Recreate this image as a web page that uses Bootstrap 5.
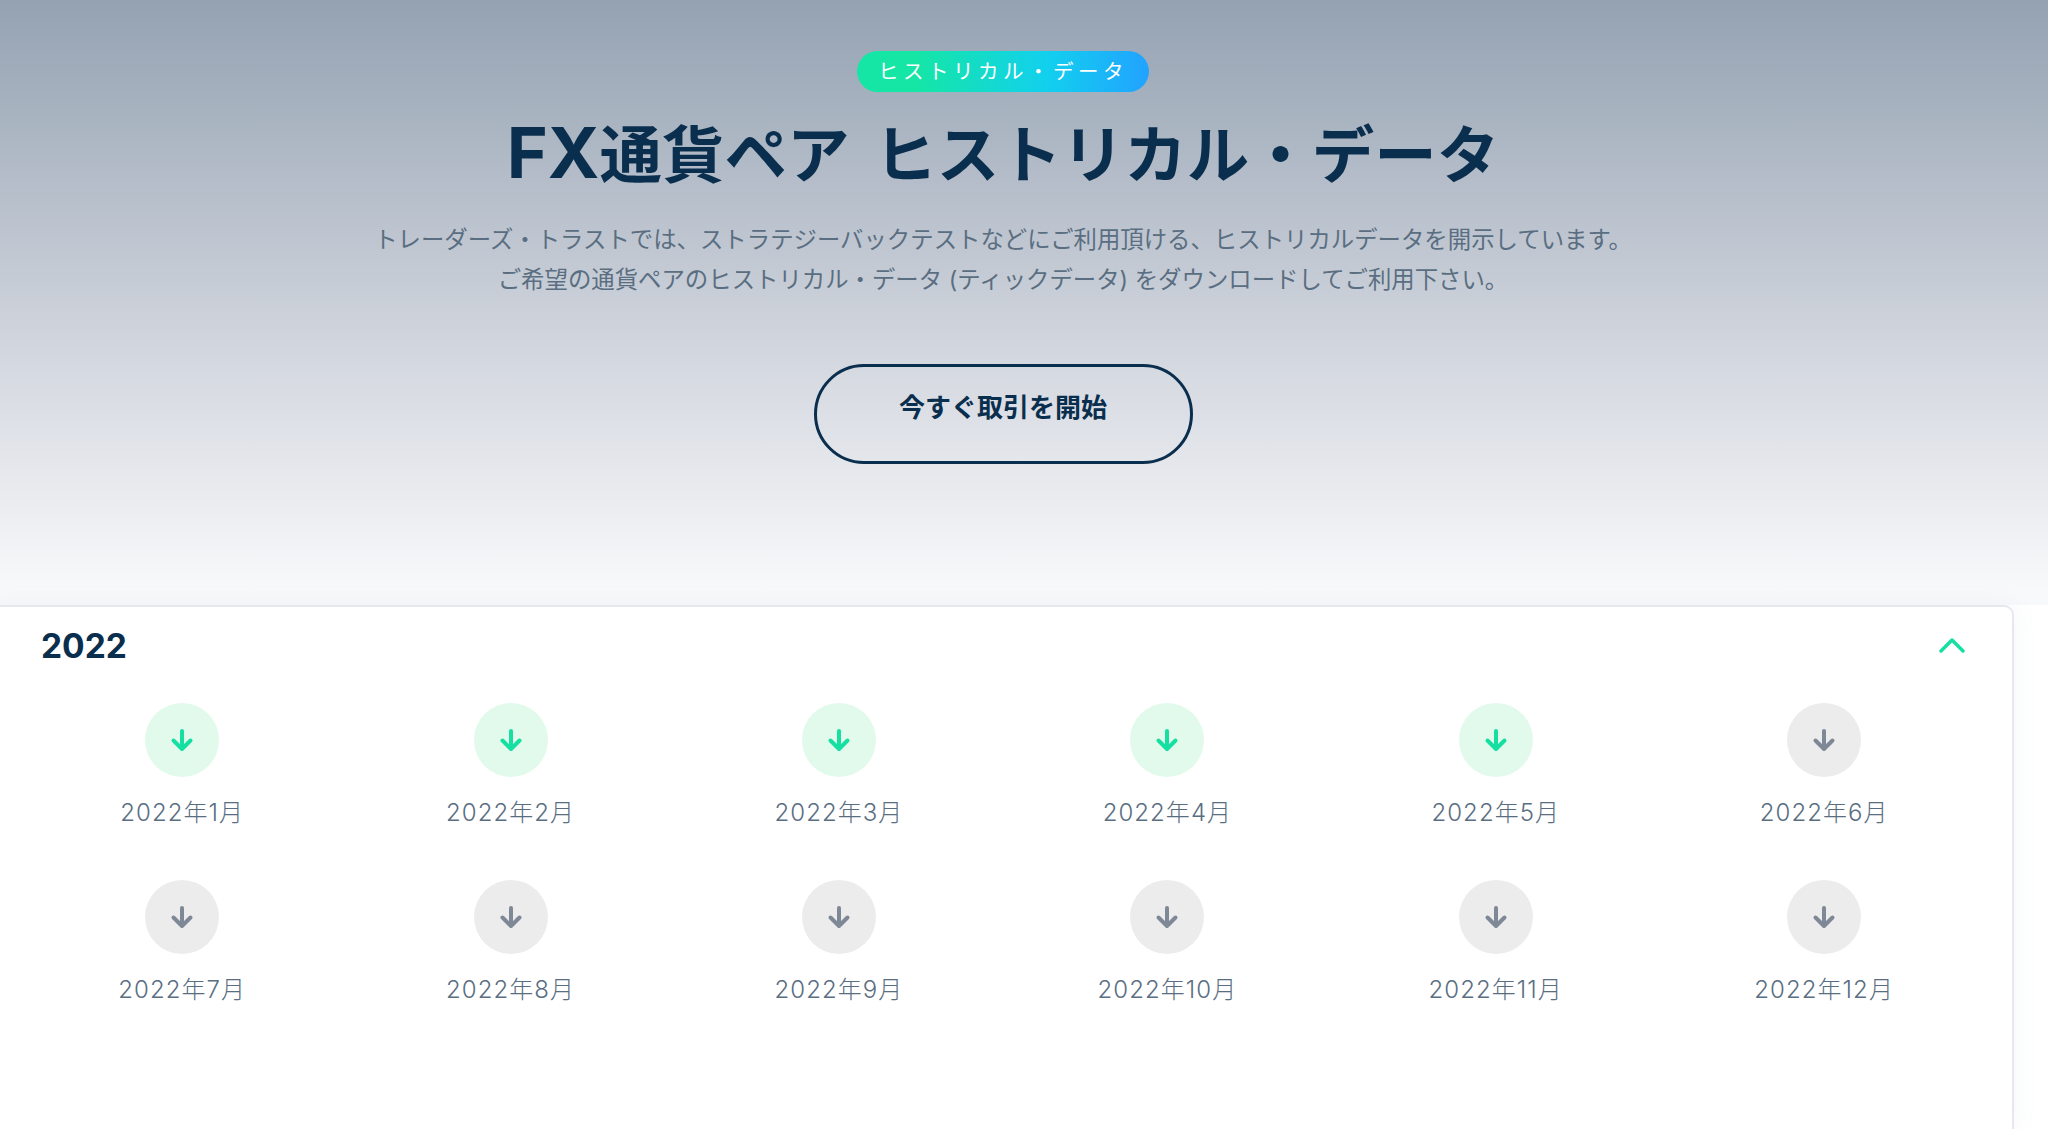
<!DOCTYPE html>
<html lang="ja">
<head>
  <meta charset="UTF-8">
  <meta name="viewport" content="width=device-width, initial-scale=1.0">
  <title>FX通貨ペア ヒストリカル・データ</title>
  <link href="https://cdn.jsdelivr.net/npm/bootstrap@5.3.0/dist/css/bootstrap.min.css" rel="stylesheet">
  <style>
    body {
      font-family: "Inter", "Noto Sans CJK JP", sans-serif;
      color: #0a2e4d;
      background: #fff;
      overflow-x: hidden;
    }
    .hero-area {
      height: 605px;
      padding: 51px 42px 0 0;
      background: linear-gradient(180deg, #94a2b2 0, #d2d6de 350px, #f8f9fa 590px);
    }
    .hero-tag {
      width: 292px;
      height: 41px;
      border-radius: 21px;
      font-size: 20.5px;
      letter-spacing: 4.5px;
      line-height: 41px;
      color: #fff;
      background: linear-gradient(90deg, #15e6a5 20%, #12d0ee 65%, #22a2ff 100%);
    }
    .hero-title {
      font-size: 62.5px;
      font-weight: 700;
      line-height: 80px;
      word-spacing: 10px;
      margin: 23px 0 0;
      color: #0a2e4d;
    }
    .hero-title-latin {
      font-size: 70px;
      line-height: 0;
    }
    .hero-text {
      font-size: 23.4px;
      line-height: 40px;
      margin: 25px 0 0;
      color: #5a6e82;
    }
    .hero-btn {
      width: 379px;
      height: 100px;
      margin-top: 64px;
      padding: 0 0 13px;
      border: 3.5px solid #0a2e4d;
      border-radius: 50px;
      font-size: 26px;
      font-weight: 700;
      color: #0a2e4d;
      background: transparent;
    }
    .year-panel {
      width: 2026px;
      height: 524px;
      margin-left: -12px;
      padding: 0 27px 0 28px;
      border: 2px solid #e6e8ee;
      border-bottom: 0;
      border-radius: 0 10px 0 0;
      background: #fff;
      box-shadow: 0 0 24px rgba(120, 135, 170, .08);
    }
    .year-head {
      height: 78px;
      padding: 0 20px 0 23px;
    }
    .year-label {
      font-size: 33.5px;
      font-weight: 700;
      color: #0a2e4d;
    }
    .month-grid {
      display: grid;
      grid-template-columns: repeat(6, 328.4px);
      grid-auto-rows: 177px;
      margin-top: 18px;
    }
    .month-circle {
      width: 74px;
      height: 74px;
      color: #7e8896;
      background: #ececec;
    }
    .month-item.is-ready .month-circle {
      color: #15e0a2;
      background: #e2faec;
    }
    .month-name {
      font-size: 24px;
      font-weight: 300;
      letter-spacing: 1.05px;
      line-height: 34px;
      margin-top: 19px;
      color: #5a6e82;
    }
  </style>
</head>
<body>

<!-- Hero -->
<div class="hero-area text-center">
  <div class="hero-tag mx-auto">ヒストリカル・データ</div>
  <h1 class="hero-title"><span class="hero-title-latin">FX</span>通貨ペア ヒストリカル・データ</h1>
  <p class="hero-text">トレーダーズ・トラストでは、ストラテジーバックテストなどにご利用頂ける、ヒストリカルデータを開示しています。<br>ご希望の通貨ペアのヒストリカル・データ (ティックデータ) をダウンロードしてご利用下さい。</p>
  <button type="button" class="btn hero-btn">今すぐ取引を開始</button>
</div>

<!-- Year panel -->
<div class="year-panel">
  <div class="year-head d-flex justify-content-between align-items-center">
    <span class="year-label">2022</span>
    <svg width="26" height="16" viewBox="0 0 26 16" fill="none" stroke="#15e0a2" stroke-width="3.5" stroke-linecap="round" stroke-linejoin="round"><path d="M2 13 13 2l11 11"/></svg>
  </div>
  <div class="month-grid" id="months"></div>
</div>

<script src="https://cdn.jsdelivr.net/npm/bootstrap@5.3.0/dist/js/bootstrap.bundle.min.js"></script>
<script>
  const monthGrid = document.getElementById('months');
  for (let m = 1; m <= 12; m++) {
    const ready = m <= 5 ? ' is-ready' : '';
    monthGrid.insertAdjacentHTML('beforeend', `
      <div class="month-item${ready} d-flex flex-column align-items-center">
        <div class="month-circle rounded-circle d-flex align-items-center justify-content-center">
          <svg width="24" height="24" viewBox="0 0 24 24" fill="none" stroke="currentColor" stroke-width="4" stroke-linecap="round" stroke-linejoin="round"><path d="M12 3v18M3.5 12.5 12 21l8.5-8.5"/></svg>
        </div>
        <div class="month-name">2022年${m}月</div>
      </div>`);
  }
</script>

</body>
</html>
